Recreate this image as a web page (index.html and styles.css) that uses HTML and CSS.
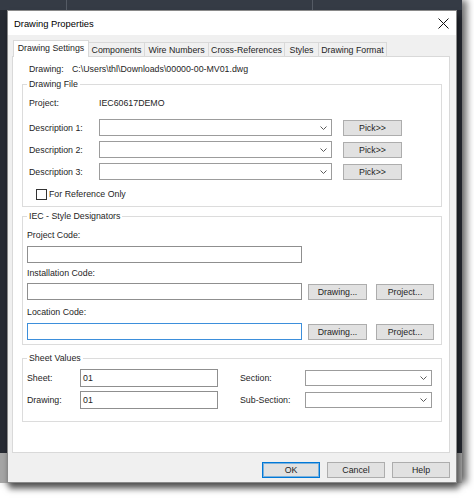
FILE: index.html
```html
<!DOCTYPE html>
<html>
<head>
<meta charset="utf-8">
<title>Drawing Properties</title>
<link rel="stylesheet" href="styles.css">
</head>
<body>
<div class="desktop">
  <div class="topband"><span class="seg seg-a"></span><span class="seg seg-b"></span><span class="seg seg-c"></span></div>
  <div class="dialog">
    <div class="titlebar">
      <span class="title">Drawing Properties</span>
      <svg class="close" viewBox="0 0 11 11"><path d="M0.5 0.5 L10.5 10.5 M10.5 0.5 L0.5 10.5" stroke="#111" stroke-width="1" fill="none"/></svg>
    </div>
    <div class="client">
      <div class="tabs">
        <div class="tab active t-settings">Drawing Settings</div>
        <div class="tab t-components">Components</div>
        <div class="tab t-wire">Wire Numbers</div>
        <div class="tab t-cross">Cross-References</div>
        <div class="tab t-styles">Styles</div>
        <div class="tab t-format">Drawing Format</div>
      </div>
      <div class="page">
        <div class="drawing-line"><span class="dl-label">Drawing:</span><span>C:\Users\thl\Downloads\00000-00-MV01.dwg</span></div>

        <div class="group g-file">
          <div class="legend">Drawing File</div>
          <div class="project-row"><span class="lbl-70">Project:</span><span>IEC60617DEMO</span></div>
          <div class="desc-row first"><span class="lbl-70">Description 1:</span><div class="combo"><svg class="chev" viewBox="0 0 7 4"><polyline points="0.5,0.5 3.5,3.5 6.5,0.5" fill="none" stroke="#5a5a5a"/></svg></div><div class="btn pick">Pick&gt;&gt;</div></div>
          <div class="desc-row"><span class="lbl-70">Description 2:</span><div class="combo"><svg class="chev" viewBox="0 0 7 4"><polyline points="0.5,0.5 3.5,3.5 6.5,0.5" fill="none" stroke="#5a5a5a"/></svg></div><div class="btn pick">Pick&gt;&gt;</div></div>
          <div class="desc-row"><span class="lbl-70">Description 3:</span><div class="combo"><svg class="chev" viewBox="0 0 7 4"><polyline points="0.5,0.5 3.5,3.5 6.5,0.5" fill="none" stroke="#5a5a5a"/></svg></div><div class="btn pick">Pick&gt;&gt;</div></div>
          <div class="check-row"><span class="checkbox"></span><span>For Reference Only</span></div>
        </div>

        <div class="group g-iec">
          <div class="legend">IEC - Style Designators</div>
          <div class="field-label first">Project Code:</div>
          <div class="code-row r-project"><div class="text"></div></div>
          <div class="field-label second">Installation Code:</div>
          <div class="code-row r-install"><div class="text"></div><div class="btn b-drawing">Drawing...</div><div class="btn b-project">Project...</div></div>
          <div class="field-label third">Location Code:</div>
          <div class="code-row r-location"><div class="text focus"></div><div class="btn b-drawing">Drawing...</div><div class="btn b-project">Project...</div></div>
        </div>

        <div class="group g-sheet">
          <div class="legend">Sheet Values</div>
          <div class="sheet-row first"><span class="lbl-sheet">Sheet:</span><div class="sheet-input">01</div><span class="lbl-section">Section:</span><div class="combo combo-small"><svg class="chev" viewBox="0 0 7 4"><polyline points="0.5,0.5 3.5,3.5 6.5,0.5" fill="none" stroke="#5a5a5a"/></svg></div></div>
          <div class="sheet-row"><span class="lbl-sheet">Drawing:</span><div class="sheet-input">01</div><span class="lbl-section">Sub-Section:</span><div class="combo combo-small"><svg class="chev" viewBox="0 0 7 4"><polyline points="0.5,0.5 3.5,3.5 6.5,0.5" fill="none" stroke="#5a5a5a"/></svg></div></div>
        </div>
      </div>
      <div class="actions">
        <div class="btn act ok">OK</div>
        <div class="btn act">Cancel</div>
        <div class="btn act">Help</div>
      </div>
    </div>
  </div>
</div>
</body>
</html>
```

FILE: styles.css
```css
* { box-sizing: border-box; }
html, body { margin: 0; padding: 0; }
body {
  width: 474px;
  height: 504px;
  overflow: hidden;
  background: #ffffff;
  font-family: "Liberation Sans", Arial, sans-serif;
  font-size: 8.8px;
  color: #1e1e1e;
}

.desktop {
  width: 462px;
  height: 483px;
  padding-left: 7px;
  background: linear-gradient(to bottom, #272b33 0, #272b33 453px, #a6a6a6 453px);
  box-shadow: 5px 0 7px rgba(0, 0, 0, 0.55);
}
.topband {
  height: 10px;
  margin-left: -7px;
  width: 462px;
  display: flex;
  background: #353b45;
}
.seg { height: 10px; border-right: 1px solid #555b65; }
.seg-a { width: 67px; }
.seg-b { width: 246px; }
.seg-c { flex: 1; border-right: none; }

.dialog {
  width: 450px;
  height: 473px;
  border: 1px solid #8a8a8a;
  background: #f0f0f0;
  display: flex;
  flex-direction: column;
  box-shadow: 2px 6px 6px rgba(0, 0, 0, 0.55);
}
.titlebar {
  height: 24px;
  flex: none;
  background: #ffffff;
  display: flex;
  align-items: center;
  justify-content: space-between;
  padding: 0 7px 0 6px;
  font-size: 9.4px;
  color: #000;
}
.close { width: 11px; height: 11px; display: block; }

.client {
  flex: 1;
  display: flex;
  flex-direction: column;
  padding: 5px 6px 0 4px;
}
.tabs {
  display: flex;
  align-items: flex-end;
  height: 16px;
  margin-left: 1px;
}
.tab {
  height: 14px;
  border: 1px solid #d9d9d9;
  border-bottom: none;
  background: #f0f0f0;
  display: flex;
  align-items: center;
  justify-content: center;
  white-space: nowrap;
  color: #1e1e1e;
}
.tab + .tab { margin-left: -1px; }
.tab.active {
  height: 17px;
  margin-bottom: -1px;
  background: #ffffff;
  position: relative;
  z-index: 1;
  padding-bottom: 2px;
}
.t-settings { width: 76px; }
.t-components { width: 57px; }
.t-wire { width: 65px; }
.t-cross { width: 77px; }
.t-styles { width: 35px; }
.t-format { width: 69px; }

.page {
  width: 438px;
  height: 397px;
  flex: none;
  border: 1px solid #d9d9d9;
  background: #ffffff;
  padding: 0 7px 0 9px;
}
.drawing-line {
  margin-top: 6px;
  height: 12px;
  line-height: 12px;
  padding-left: 7px;
  display: flex;
  white-space: nowrap;
}
.dl-label { width: 43px; }

.group {
  border: 1px solid #dcdcdc;
  display: flex;
  flex-direction: column;
}
.legend {
  align-self: flex-start;
  margin: -7px 0 0 4px;
  padding: 0 2px;
  height: 12px;
  line-height: 12px;
  background: #ffffff;
  white-space: nowrap;
}

.g-file { margin-top: 9px; height: 123px; padding-left: 6px; }
.g-file .legend { margin-left: -2px; }
.project-row {
  margin-top: 7px;
  height: 12px;
  line-height: 12px;
  display: flex;
}
.lbl-70 { width: 70px; flex: none; white-space: nowrap; }
.desc-row {
  display: flex;
  align-items: center;
  height: 17px;
  margin-top: 5px;
}
.desc-row.first { margin-top: 10px; }
.combo {
  width: 233px;
  height: 17px;
  border: 1px solid #9c9c9c;
  background: #ffffff;
  display: flex;
  align-items: center;
  justify-content: flex-end;
  padding-right: 4px;
}
.chev { width: 7px; height: 4px; display: block; }
.btn {
  height: 16px;
  border: 1px solid #adadad;
  background: #e1e1e1;
  display: flex;
  align-items: center;
  justify-content: center;
  white-space: nowrap;
  color: #1e1e1e;
}
.pick { width: 59px; margin-left: 11px; }
.check-row {
  margin-top: 8px;
  height: 12px;
  display: flex;
  align-items: center;
  padding-left: 7px;
}
.checkbox {
  width: 11px;
  height: 11px;
  border: 1px solid #333333;
  background: #ffffff;
  margin-right: 2px;
}

.g-iec { margin-top: 9px; height: 129px; padding-left: 4px; }
.g-iec .legend { margin-left: 0; }
.field-label { height: 12px; line-height: 12px; }
.field-label.first { margin-top: 7px; }
.field-label.second { margin-top: 4px; }
.field-label.third { margin-top: 6px; }
.code-row { display: flex; align-items: center; height: 17px; }
.r-project { margin-top: 5px; }
.r-install { margin-top: 4px; }
.r-location { margin-top: 5px; }
.text {
  width: 275px;
  height: 17px;
  border: 1px solid #8f8f8f;
  background: #ffffff;
}
.text.focus { border-color: #3d8fdb; }
.b-drawing { width: 59px; margin-left: 6px; }
.b-project { width: 58px; margin-left: 9px; }

.g-sheet { margin-top: 13px; height: 64px; padding-left: 4px; }
.g-sheet .legend { margin-left: 0; }
.sheet-row {
  display: flex;
  align-items: center;
  height: 18px;
  margin-top: 4px;
}
.sheet-row.first { margin-top: 5px; }
.lbl-sheet { width: 53px; flex: none; }
.sheet-input {
  width: 138px;
  height: 18px;
  border: 1px solid #8f8f8f;
  background: #ffffff;
  padding-left: 2px;
  line-height: 16px;
}
.lbl-section { width: 65px; margin-left: 22px; flex: none; white-space: nowrap; }
.combo-small { width: 127px; height: 16px; }

.actions {
  display: flex;
  justify-content: flex-end;
  gap: 7px;
  margin-top: 9px;
}
.act { width: 58px; height: 16px; }
.ok {
  border-color: #0078d7;
  box-shadow: inset 0 0 0 1px rgba(0, 120, 215, 0.45);
}
```
